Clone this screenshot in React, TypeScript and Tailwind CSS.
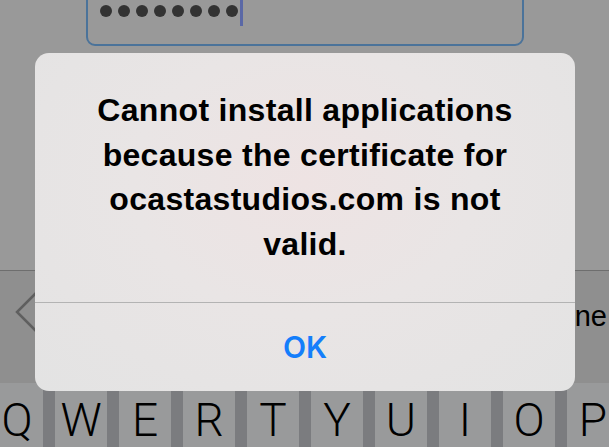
import React from 'react'

const keys = ['Q', 'W', 'E', 'R', 'T', 'Y', 'U', 'I', 'O', 'P']

export default function App() {
    return (
        <div className="relative w-[609px] h-[447px] overflow-hidden bg-[#999999] font-['Liberation_Sans',Arial,sans-serif]">
            {/* Page behind the alert */}
            <div className="flex flex-col h-full">
                {/* Password field */}
                <div className="h-[270px]">
                    <div className="ml-[86px] mt-[-40px] w-[438px] h-[86px] border-2 border-[#4b739a] rounded-[9px] pt-[38px] pl-[12px] flex items-start">
                        <div className="flex gap-[6px] mt-[5px]">
                            {Array.from({ length: 8 }).map((_, i) => (
                                <span key={i} className="block w-[12px] h-[12px] rounded-full bg-[#333333]" />
                            ))}
                        </div>
                        <span className="block w-[3px] h-[26px] ml-[2px] bg-[#5a68a6]" />
                    </div>
                </div>

                {/* Keyboard toolbar */}
                <div className="h-px bg-[#6e6e6e]" />
                <div className="h-[112px] bg-[#8f8f8f] flex justify-between items-start">
                    <svg width="30" height="44" viewBox="0 0 30 44" className="ml-[14px] mt-[21px]">
                        <path d="M22 1 L3 20 L22 39" fill="none" stroke="#5f5f5f" strokeWidth="2.5" />
                    </svg>
                    <span className="mt-[31px] mr-[2px] text-[29px] leading-none text-black">Done</span>
                </div>

                {/* Keyboard */}
                <div className="flex-1 bg-[#7b7c7f] flex gap-[12px] ml-[-9px]">
                    {keys.map((k) => (
                        <div
                            key={k}
                            className="w-[52px] shrink-0 bg-[#999a9b] rounded-t-[4px] flex justify-center pt-[14px] text-[46px] leading-none font-light text-black font-['Roboto','Liberation_Sans',sans-serif]"
                        >
                            {k}
                        </div>
                    ))}
                </div>
            </div>

            {/* Alert */}
            <div className="absolute left-[35px] top-[53px] w-[540px] h-[338px] rounded-[14px] overflow-hidden flex flex-col bg-[radial-gradient(ellipse_at_50%_38%,#eee3e3_0%,#e9e5e5_45%,#e3e3e3_100%)]">
                <div className="h-[249px] pt-[35px] text-center text-[32px] leading-[44.5px] font-bold tracking-[0.3px] text-black">
                    Cannot install applications
                    <br />
                    because the certificate for
                    <br />
                    ocastastudios.com is not
                    <br />
                    valid.
                </div>
                <div className="h-px bg-[#b3b3b3]" />
                <div className="flex-1 flex items-center justify-center text-[30px] font-semibold text-[#147efb] font-['Inter','Liberation_Sans',sans-serif]">
                    OK
                </div>
            </div>
        </div>
    )
}
